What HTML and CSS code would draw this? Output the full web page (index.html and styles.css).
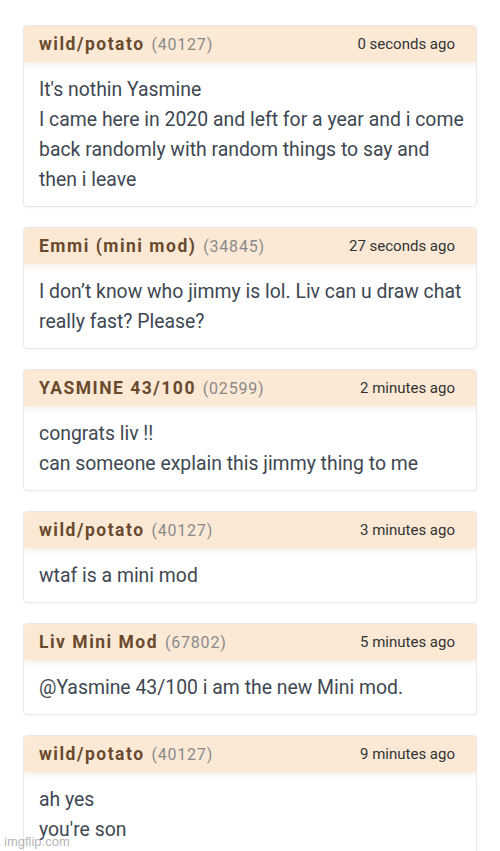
FILE: index.html
```html
<!DOCTYPE html>
<html lang="en">
<head>
  <meta charset="UTF-8">
  <meta name="viewport" content="width=device-width, initial-scale=1.0">
  <title>Chat</title>
  <link rel="stylesheet" href="styles.css">
</head>
<body>
<div class="feed">
  <div class="post">
    <div class="post-header">
      <span class="post-user">wild/potato <span class="post-id">(40127)</span></span>
      <span class="post-time">0 seconds ago</span>
    </div>
    <div class="post-body">It's nothin Yasmine
I came here in 2020 and left for a year and i come back randomly with random things to say and then i leave</div>
  </div>

  <div class="post">
    <div class="post-header">
      <span class="post-user">Emmi (mini mod) <span class="post-id">(34845)</span></span>
      <span class="post-time">27 seconds ago</span>
    </div>
    <div class="post-body">I don’t know who jimmy is lol. Liv can u draw chat really fast? Please?</div>
  </div>

  <div class="post">
    <div class="post-header">
      <span class="post-user">YASMINE 43/100 <span class="post-id">(02599)</span></span>
      <span class="post-time">2 minutes ago</span>
    </div>
    <div class="post-body">congrats liv !!
can someone explain this jimmy thing to me</div>
  </div>

  <div class="post">
    <div class="post-header">
      <span class="post-user">wild/potato <span class="post-id">(40127)</span></span>
      <span class="post-time">3 minutes ago</span>
    </div>
    <div class="post-body">wtaf is a mini mod</div>
  </div>

  <div class="post">
    <div class="post-header">
      <span class="post-user">Liv Mini Mod <span class="post-id">(67802)</span></span>
      <span class="post-time">5 minutes ago</span>
    </div>
    <div class="post-body">@Yasmine 43/100 i am the new Mini mod.</div>
  </div>

  <div class="post">
    <div class="post-header">
      <span class="post-user">wild/potato <span class="post-id">(40127)</span></span>
      <span class="post-time">9 minutes ago</span>
    </div>
    <div class="post-body">ah yes
you're son</div>
  </div>
</div>

<div class="watermark">imgflip.com</div>
</body>
</html>
```

FILE: styles.css
```css
* {
  box-sizing: border-box;
  margin: 0;
  padding: 0;
}

:root {
  --header-bg: #fbe9d6;
  --name-color: #6a4a2d;
  --id-color: #8a8a8a;
  --text-color: #3e4752;
  --time-color: #333333;
  --border: #ece9e4;
}

html, body {
  height: 100%;
  overflow: hidden;
}

body {
  font-family: Roboto, 'Noto Sans', sans-serif;
  background-color: #ffffff;
  color: var(--text-color);
}

.feed {
  display: flex;
  flex-direction: column;
  gap: 20px;
  padding: 25px 23px 0 23px;
}

.post {
  background-color: #ffffff;
  border: 1px solid var(--border);
  border-radius: 4px;
  box-shadow: 0 1px 3px rgba(0, 0, 0, 0.04);
  overflow: hidden;
}

.post-header {
  display: flex;
  justify-content: space-between;
  align-items: center;
  height: 36px;
  padding: 0 21px 0 15px;
  background-color: var(--header-bg);
  box-shadow: 0 3px 5px rgba(230, 210, 190, 0.35);
  position: relative;
}

.post-user {
  font-size: 17.5px;
  font-weight: 700;
  letter-spacing: 1.5px;
  color: var(--name-color);
}

.post-id {
  font-size: 16px;
  font-weight: 400;
  color: var(--id-color);
  letter-spacing: 0.8px;
  margin-left: 1px;
}

.post-time {
  font-size: 15px;
  color: var(--time-color);
}

.post-body {
  padding: 13px 12px 11px 15px;
  font-size: 19.4px;
  line-height: 30px;
  white-space: pre-wrap;
  word-break: break-word;
}

.watermark {
  position: absolute;
  left: 4px;
  bottom: 2px;
  font-family: 'Liberation Sans', Arial, sans-serif;
  font-size: 13px;
  color: rgba(160, 160, 160, 0.8);
}
```
